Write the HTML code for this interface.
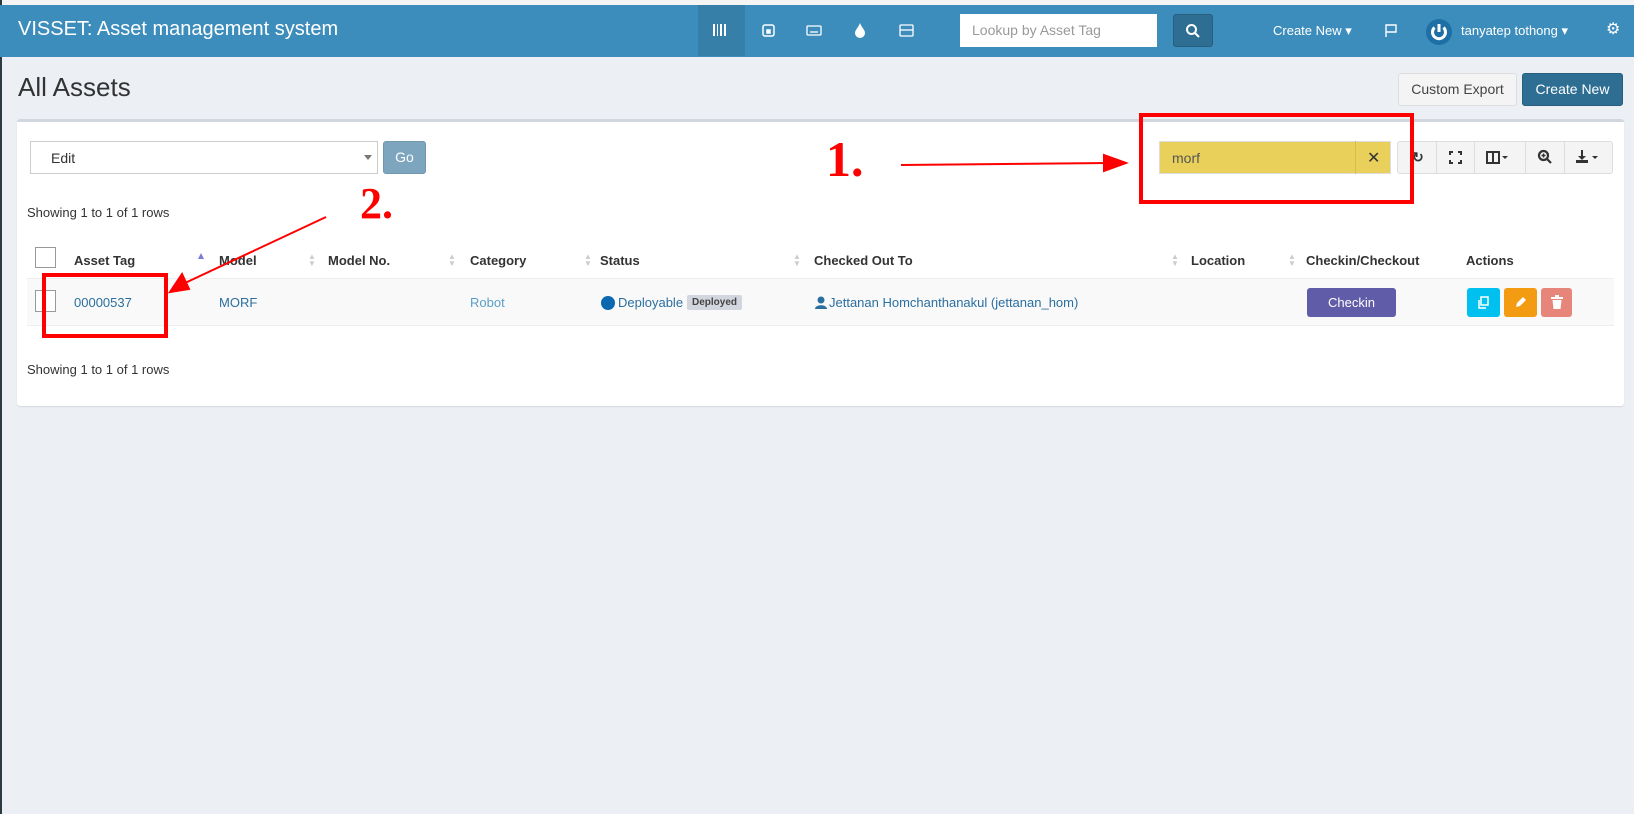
<!DOCTYPE html>
<html><head><meta charset="utf-8"><style>
*{box-sizing:border-box;margin:0;padding:0}
body{width:1634px;height:814px;background:#ecf0f5;font-family:"Liberation Sans",sans-serif;font-size:13px;color:#333;position:relative;overflow:hidden}
.a{position:absolute}
.nav{left:0;top:5px;width:1634px;height:52px;background:#3c8dbc}
.w{color:#fff}
.th{font-weight:bold;font-size:13px;top:253px;color:#333}
.lk{color:#2a6fa0;font-size:13px;top:295px}
.sa{color:#ccc;font-size:8px;line-height:7px;top:253px}
</style></head><body>
<div class="a" style="left:0;top:0;width:1634px;height:5px;background:#f4f4f4"></div>
<div class="a" style="left:0;top:0;width:2px;height:814px;background:#2c3b41"></div>
<div class="a nav"></div>
<div class="a w" style="left:18px;top:18px;font-size:20px">VISSET: Asset management system</div>
<div class="a" style="left:698px;top:5px;width:47px;height:51px;background:#367fa9"></div>
<svg class="a" style="left:712px;top:24px" width="16" height="12"><g fill="#fff"><rect x="1" width="2" height="12"/><rect x="5" width="1" height="12"/><rect x="8" width="2" height="12"/><rect x="12" width="2" height="12"/></g></svg>
<svg class="a" style="left:762px;top:24px" width="13" height="13" fill="none" stroke="#fff" stroke-width="1.5"><rect x="1" y="1" width="11" height="11" rx="2"/><rect x="5" y="6" width="3" height="3" fill="#fff"/></svg>
<svg class="a" style="left:806px;top:25px" width="16" height="11" fill="none" stroke="#fff" stroke-width="1.3"><rect x="1" y="1" width="14" height="9" rx="1"/><line x1="4" y1="7" x2="12" y2="7"/></svg>
<svg class="a" style="left:854px;top:22px" width="12" height="16"><path d="M6 1 C8 6 11 8 11 11 A5 5 0 0 1 1 11 C1 8 4 6 6 1Z" fill="#fff"/></svg>
<svg class="a" style="left:899px;top:24px" width="15" height="13" fill="none" stroke="#fff" stroke-width="1.3"><rect x="1" y="1" width="13" height="11" rx="1"/><line x1="1" y1="6" x2="14" y2="6"/></svg>
<div class="a" style="left:960px;top:14px;width:197px;height:33px;background:#fff;color:#999;font-size:14px;padding:8px 12px">Lookup by Asset Tag</div>
<div class="a" style="left:1173px;top:14px;width:40px;height:33px;background:#2e6e93;border:1px solid #285e7e;border-radius:3px"></div>
<svg class="a" style="left:1185px;top:23px" width="16" height="16" fill="none" stroke="#fff" stroke-width="2"><circle cx="6.5" cy="6.5" r="4.5"/><line x1="10" y1="10" x2="14" y2="14"/></svg>
<div class="a w" style="left:1273px;top:23px;font-size:13px">Create New ▾</div>
<svg class="a" style="left:1384px;top:23px" width="14" height="14" fill="none" stroke="#fff" stroke-width="1.4"><path d="M2 14V2h10v7H2"/></svg>
<svg class="a" style="left:1425px;top:18px" width="28" height="28"><circle cx="14" cy="14" r="13" fill="#1d6fa5"/><path d="M9.5 9.5 A6.5 6.5 0 1 0 18.5 9.5" fill="none" stroke="#fff" stroke-width="3"/><line x1="14" y1="6" x2="14" y2="14" stroke="#fff" stroke-width="3"/></svg>
<div class="a w" style="left:1461px;top:23px;font-size:13px">tanyatep tothong ▾</div>
<div class="a w" style="left:1606px;top:19px;font-size:16px">⚙</div>

<div class="a" style="left:18px;top:72px;font-size:26px;color:#333">All Assets</div>
<div class="a" style="left:1398px;top:73px;width:119px;height:33px;background:#f4f4f4;border:1px solid #ddd;font-size:14px;text-align:center;line-height:31px;color:#444;border-radius:3px">Custom Export</div>
<div class="a" style="left:1522px;top:73px;width:101px;height:33px;background:#2e6e93;border:1px solid #285e7e;font-size:14px;text-align:center;line-height:31px;color:#fff;border-radius:3px">Create New</div>

<div class="a" style="left:17px;top:119px;width:1607px;height:287px;background:#fff;border-top:3px solid #d2d6de;border-radius:3px;box-shadow:0 1px 1px rgba(0,0,0,.1)"></div>
<div class="a" style="left:30px;top:141px;width:348px;height:33px;border:1px solid #ccc;font-size:14px;padding:8px 20px">Edit</div>
<div class="a" style="left:364px;top:155px;border-left:4px solid transparent;border-right:4px solid transparent;border-top:5px solid #777"></div>
<div class="a" style="left:383px;top:141px;width:43px;height:33px;background:#7ea5be;border:1px solid #6f97b0;border-radius:3px;color:#fff;font-size:14px;text-align:center;line-height:31px">Go</div>
<div class="a" style="left:27px;top:205px">Showing 1 to 1 of 1 rows</div>
<div class="a" style="left:27px;top:362px">Showing 1 to 1 of 1 rows</div>

<div class="a" style="left:1159px;top:141px;width:232px;height:33px;background:#e8d05a;border:1px solid #ddd"></div>
<div class="a" style="left:1355px;top:141px;width:1px;height:33px;background:#d4bd4a"></div>
<div class="a" style="left:1172px;top:150px;font-size:14px;color:#555">morf</div>
<div class="a" style="left:1367px;top:148px;font-size:16px;color:#333">✕</div>
<div class="a" style="left:1397px;top:141px;width:216px;height:33px;background:#f4f4f4;border:1px solid #ddd;border-radius:3px"></div>
<div class="a" style="left:1436px;top:141px;width:1px;height:33px;background:#ddd"></div>
<div class="a" style="left:1474px;top:141px;width:1px;height:33px;background:#ddd"></div>
<div class="a" style="left:1525px;top:141px;width:1px;height:33px;background:#ddd"></div>
<div class="a" style="left:1564px;top:141px;width:1px;height:33px;background:#ddd"></div>
<div class="a" style="left:1412px;top:149px;font-size:14px;font-weight:bold">↻</div>
<svg class="a" style="left:1449px;top:151px" width="13" height="13" fill="none" stroke="#333" stroke-width="2"><path d="M1 4V1h3M9 1h3v3M12 9v3H9M4 12H1V9"/></svg>
<svg class="a" style="left:1486px;top:151px" width="24" height="13"><rect x="1" y="1" width="12" height="11" fill="none" stroke="#333" stroke-width="2"/><line x1="7" y1="1" x2="7" y2="12" stroke="#333" stroke-width="2"/><path d="M16 5h6l-3 3z" fill="#333"/></svg>
<svg class="a" style="left:1537px;top:149px" width="16" height="16" fill="none" stroke="#333" stroke-width="2.2"><circle cx="6.5" cy="6.5" r="4.5"/><line x1="10" y1="10" x2="14" y2="14"/><path d="M6.5 4.5v4M4.5 6.5h4" stroke-width="1.5"/></svg>
<svg class="a" style="left:1575px;top:149px" width="26" height="16" fill="#333"><path d="M6 1h2v6h3l-4 4-4-4h3z"/><rect x="1" y="11" width="12" height="3"/><path d="M17 7h6l-3 3z"/></svg>

<div class="a" style="left:35px;top:247px;width:21px;height:21px;border:1px solid #999;background:#fff"></div>
<div class="a th" style="left:74px">Asset Tag</div>
<div class="a" style="left:198px;top:253px;border-left:3px solid transparent;border-right:3px solid transparent;border-bottom:6px solid #7a7ad8"></div>
<div class="a th" style="left:219px">Model</div>
<div class="a th" style="left:328px">Model No.</div>
<div class="a th" style="left:470px">Category</div>
<div class="a th" style="left:600px">Status</div>
<div class="a th" style="left:814px">Checked Out To</div>
<div class="a th" style="left:1191px">Location</div>
<div class="a th" style="left:1306px">Checkin/Checkout</div>
<div class="a th" style="left:1466px">Actions</div>
<div class="a sa" style="left:308px">▲<br>▼</div>
<div class="a sa" style="left:448px">▲<br>▼</div>
<div class="a sa" style="left:584px">▲<br>▼</div>
<div class="a sa" style="left:793px">▲<br>▼</div>
<div class="a sa" style="left:1171px">▲<br>▼</div>
<div class="a sa" style="left:1288px">▲<br>▼</div>
<div class="a" style="left:27px;top:278px;width:1587px;height:48px;background:#f9f9f9;border-top:1px solid #eee;border-bottom:1px solid #eee"></div>
<div class="a" style="left:35px;top:290px;width:21px;height:22px;border:1px solid #999;background:#fff"></div>
<div class="a lk" style="left:74px">00000537</div>
<div class="a lk" style="left:219px">MORF</div>
<div class="a lk" style="left:470px;color:#5a9fc9">Robot</div>
<div class="a" style="left:601px;top:296px;width:14px;height:14px;border-radius:50%;background:#0a68b0"></div>
<div class="a lk" style="left:618px">Deployable</div>
<div class="a" style="left:687px;top:295px;background:#d2d6de;color:#444;font-size:10px;font-weight:bold;padding:2px 5px;border-radius:2px">Deployed</div>
<svg class="a" style="left:815px;top:296px" width="12" height="13" fill="#2a6fa0"><circle cx="6" cy="4" r="3.5"/><path d="M0 13c0-5 12-5 12 0z"/></svg>
<div class="a lk" style="left:829px">Jettanan Homchanthanakul (jettanan_hom)</div>
<div class="a" style="left:1307px;top:288px;width:89px;height:29px;background:#605ca8;border-radius:3px;color:#fff;text-align:center;line-height:29px">Checkin</div>
<div class="a" style="left:1467px;top:288px;width:33px;height:29px;background:#00c0ef;border-radius:3px"></div>
<svg class="a" style="left:1477px;top:296px" width="13" height="13" fill="none" stroke="#fff" stroke-width="1.5"><rect x="4" y="1" width="7" height="8"/><path d="M2 4v8h7"/></svg>
<div class="a" style="left:1504px;top:288px;width:33px;height:29px;background:#f39c12;border-radius:3px"></div>
<svg class="a" style="left:1514px;top:296px" width="13" height="13"><path d="M2 11l1-4 6-6 3 3-6 6z" fill="#fff"/></svg>
<div class="a" style="left:1541px;top:288px;width:31px;height:29px;background:#e8857a;border-radius:3px"></div>
<svg class="a" style="left:1551px;top:295px" width="12" height="14" fill="#fff"><rect x="0" y="2" width="12" height="2"/><rect x="4" y="0" width="4" height="2"/><path d="M1.5 5h9l-1 9h-7z"/></svg>

<div class="a" style="left:1139px;top:113px;width:275px;height:91px;border:4px solid #f00"></div>
<div class="a" style="left:42px;top:273px;width:126px;height:65px;border:4px solid #f00"></div>
<div class="a" style="left:826px;top:130px;font-family:'Liberation Serif',serif;font-weight:bold;font-size:50px;color:#f00">1.</div>
<div class="a" style="left:360px;top:178px;font-family:'Liberation Serif',serif;font-weight:bold;font-size:44px;color:#f00">2.</div>
<svg class="a" style="left:0;top:0" width="1634" height="814"><g stroke="#f00" stroke-width="2" fill="#f00"><line x1="901" y1="165" x2="1110" y2="163"/><path d="M1126 163 L1104 155 L1104 171Z"/><line x1="326" y1="217" x2="185" y2="283"/><path d="M170 292 L182 274 L189 289Z"/></g></svg>
</body></html>
